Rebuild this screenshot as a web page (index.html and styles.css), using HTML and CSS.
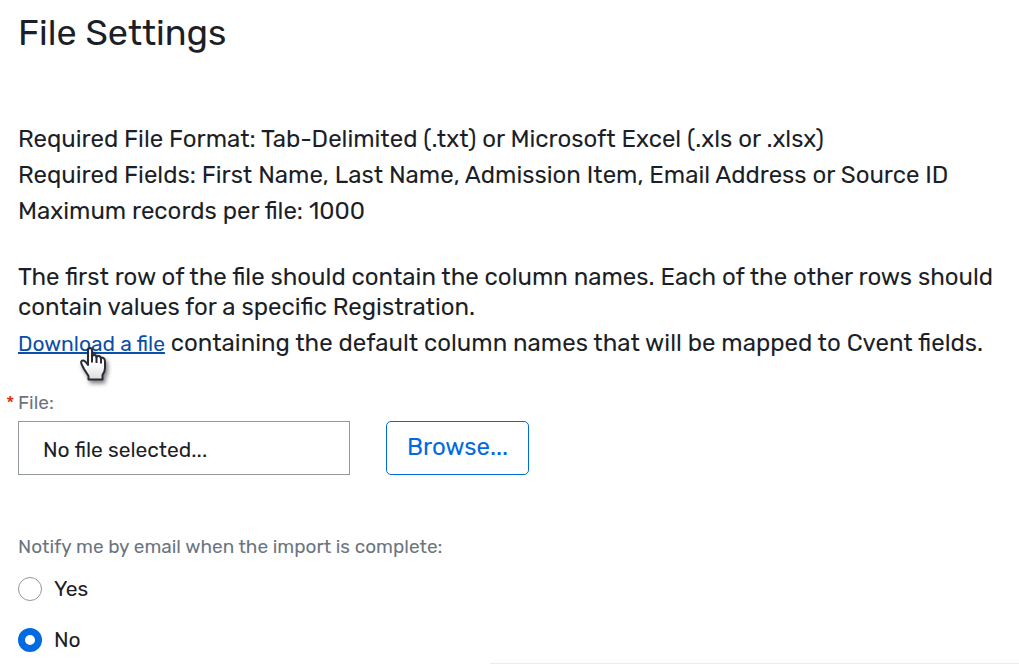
FILE: index.html
```html
<!DOCTYPE html>
<html lang="en">
<head>
<meta charset="utf-8">
<title>File Settings</title>
<link rel="stylesheet" href="styles.css">
</head>
<body>
<main class="page">
  <h1 class="title">File Settings</h1>
  <section class="intro">
    <p class="line">Required File Format: Tab-Delimited (.txt) or Microsoft Excel (.xls or .xlsx)</p>
    <p class="line">Required Fields: First Name, Last Name, Admission Item, Email Address or Source ID</p>
    <p class="line">Maximum records per file: 1000</p>
  </section>
  <section class="details">
    <p class="para">The first row of the file should contain the column names. Each of the other rows should contain values for a specific Registration.</p>
    <p class="line"><a class="link" href="#">Download a file<svg class="cursor" viewBox="0 0 30 38" aria-hidden="true"><defs><linearGradient id="palm" x1="0" y1="0" x2="0" y2="1"><stop offset="0.5" stop-color="#fff"/><stop offset="1" stop-color="#dcdcdc"/></linearGradient></defs><path class="hand" d="M8 18V4.500Q8 2 10 2T12 4.500V11Q12.500 9 14.500 9T16.500 11.500Q17 9.500 19 10T21 13Q22 11 23.500 12T25 16V22Q25 26 22.500 29V33.500H8.500V30L4 23L1.500 18Q0.500 14.500 3 14.500Q5 14.500 8 19Z"/><path class="crease" d="M12 10V16.500M16.500 11V17M21 12.500V17.500"/></svg></a> containing the default column names that will be mapped to Cvent fields.</p>
  </section>
  <form class="form">
    <label class="label required" for="file">File:</label>
    <div class="picker">
      <input class="file" id="file" type="text" value="No file selected..." readonly>
      <button class="browse" type="button">Browse...</button>
    </div>
    <fieldset class="notify">
      <legend class="label">Notify me by email when the import is complete:</legend>
      <div class="choices">
        <label class="choice"><input class="radio" type="radio" name="notify">Yes</label>
        <label class="choice"><input class="radio" type="radio" name="notify" checked>No</label>
      </div>
    </fieldset>
  </form>
</main>
<footer class="footer"></footer>
</body>
</html>
```
FILE: styles.css
```css
* { box-sizing: border-box; }
body { margin: 0; background: #fff; color: #1c1f28; font-family: Rubik, Roboto, sans-serif; }
.page { padding: 12px 18px 0; }
.title { margin: 0; font-size: 36px; line-height: 42px; font-weight: 400; }
.intro { margin-top: 67px; }
.line, .para { margin: 0; font-size: 24px; line-height: 36px; }
.para { margin-bottom: 3px; line-height: 30px; }
.details { margin-top: 33px; }
.link { position: relative; color: #0b4fa8; font-size: 21px; text-decoration-thickness: 2px; }
.cursor { position: absolute; left: 62px; top: 15px; width: 30px; height: 38px; overflow: visible; filter: drop-shadow(2px 3px 2px rgba(0, 0, 0, 0.5)); }
.hand { fill: url(#palm); stroke: #2b2b38; stroke-width: 2; stroke-linejoin: round; }
.crease { fill: none; stroke: #2b2b38; stroke-width: 2; }
.form { margin-top: 29px; }
.label { display: block; padding: 0; font-size: 19px; line-height: 24px; color: #6c7480; }
.required { position: relative; }
.required::before { content: "*"; position: absolute; left: -12px; color: #d92b08; }
.picker { display: flex; flex-wrap: wrap; gap: 36px; margin-top: 6px; }
.file { width: 332px; height: 54px; padding: 2px 24px 0; border: 1px solid #9297a0; font: inherit; font-size: 21px; color: inherit; }
.browse { padding: 0 20px 2px; height: 54px; border: 1px solid #006ae1; border-radius: 5px; background: #fff; color: #006ae1; font: inherit; font-size: 24px; }
.notify { margin: 60px 0 0; padding: 0; border: 0; }
.choices { display: grid; gap: 27px; margin-top: 18px; }
.choice { display: flex; align-items: center; gap: 12px; height: 24px; font-size: 21px; line-height: 24px; }
.radio { appearance: none; width: 24px; height: 24px; margin: 0; border: 1px solid #9297a0; border-radius: 50%; background: #fff; }
.radio:checked { border: 7px solid #006ae1; }
.footer { margin: 11px 0 0 490px; border-top: 1px solid #ebebeb; }
```
